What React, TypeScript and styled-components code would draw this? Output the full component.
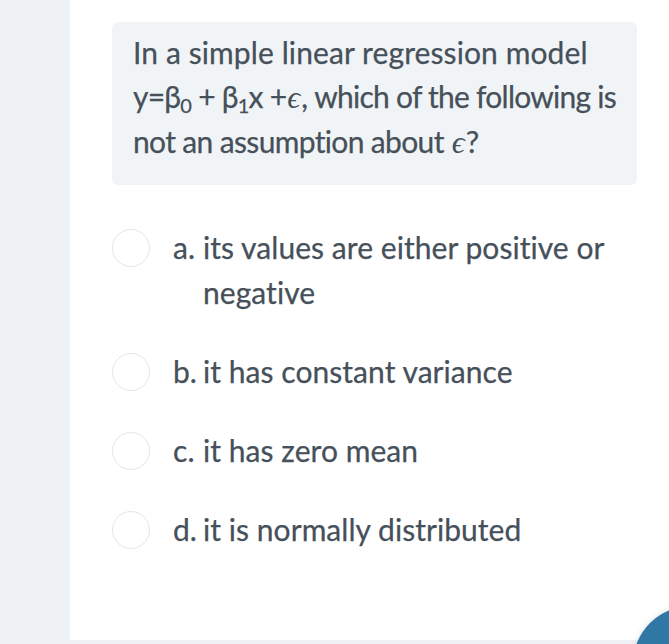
import * as React from 'react'
import styled, { createGlobalStyle } from 'styled-components'

const GlobalStyle = createGlobalStyle`
  html, body {
    margin: 0;
    padding: 0;
    background: #eef2f4;
    overflow: hidden;
  }
`

const Page = styled.div`
  display: flex;
  width: 669px;
  height: 644px;
  position: relative;
  overflow: hidden;
  font-family: Lato, "Open Sans", sans-serif;
  color: #46505a;
  -webkit-text-stroke: 0.25px #46505a;
`

const Sidebar = styled.div`
  width: 70px;
  flex-shrink: 0;
  background: #eef2f4;
`

const Card = styled.main`
  flex: 1;
  height: 640px;
  background: #ffffff;
  padding: 22px 32px 0 42px;
  box-sizing: border-box;
`

const QuestionBox = styled.div`
  background: #f1f4f6;
  border-radius: 6px;
  padding: 8px 4px 21px 21px;
  font-size: 30px;
  line-height: 44px;
`

const Line = styled.div<{ $tracking: number }>`
  white-space: nowrap;
  letter-spacing: ${p => p.$tracking}px;
`

const Eps = styled.span`
  font-family: "Liberation Serif", "DejaVu Serif", serif;
  font-style: italic;
  font-size: 32px;
  letter-spacing: 0;
  margin: 0 1px;
  -webkit-text-stroke: 0;
`

const Sub = styled.span`
  font-size: 20px;
  vertical-align: -5px;
  line-height: 0;
`

const Options = styled.ul`
  list-style: none;
  margin: 40px 0 0 0;
  padding: 0;
  display: flex;
  flex-direction: column;
  gap: 34px;
`

const Option = styled.li`
  display: flex;
  align-items: flex-start;
  font-size: 30px;
  line-height: 45px;
  letter-spacing: 0.05px;
`

const Radio = styled.span`
  width: 38px;
  height: 38px;
  box-sizing: border-box;
  border: 1.5px solid #e3e5e7;
  border-radius: 50%;
  margin-top: 3.5px;
  flex-shrink: 0;
  background: #fff;
`

const Letter = styled.span`
  margin-left: 23px;
  width: 30px;
  flex-shrink: 0;
`

const Label = styled.span`
  flex: 1;
`

const Fab = styled.div`
  position: absolute;
  left: 633px;
  top: 606px;
  width: 116px;
  height: 116px;
  border-radius: 50%;
  background: #2f78a6;
  box-shadow: 0 0 6px rgba(0, 0, 0, 0.12);
`

const options = [
  { letter: 'a.', text: 'its values are either positive or negative' },
  { letter: 'b.', text: 'it has constant variance' },
  { letter: 'c.', text: 'it has zero mean' },
  { letter: 'd.', text: 'it is normally distributed' },
]

export default function App() {
  return (
    <Page>
      <GlobalStyle />
      <Sidebar />
      <Card>
        <QuestionBox>
          <Line $tracking={0.1}>In a simple linear regression model</Line>
          <Line $tracking={-0.75}>
            y=β<Sub>0</Sub> + β<Sub>1</Sub>x +<Eps>ϵ</Eps>, which of the following is
          </Line>
          <Line $tracking={-0.65}>
            not an assumption about <Eps>ϵ</Eps>?
          </Line>
        </QuestionBox>
        <Options>
          {options.map(o => (
            <Option key={o.letter}>
              <Radio />
              <Letter>{o.letter}</Letter>
              <Label>{o.text}</Label>
            </Option>
          ))}
        </Options>
      </Card>
      <Fab />
    </Page>
  )
}
